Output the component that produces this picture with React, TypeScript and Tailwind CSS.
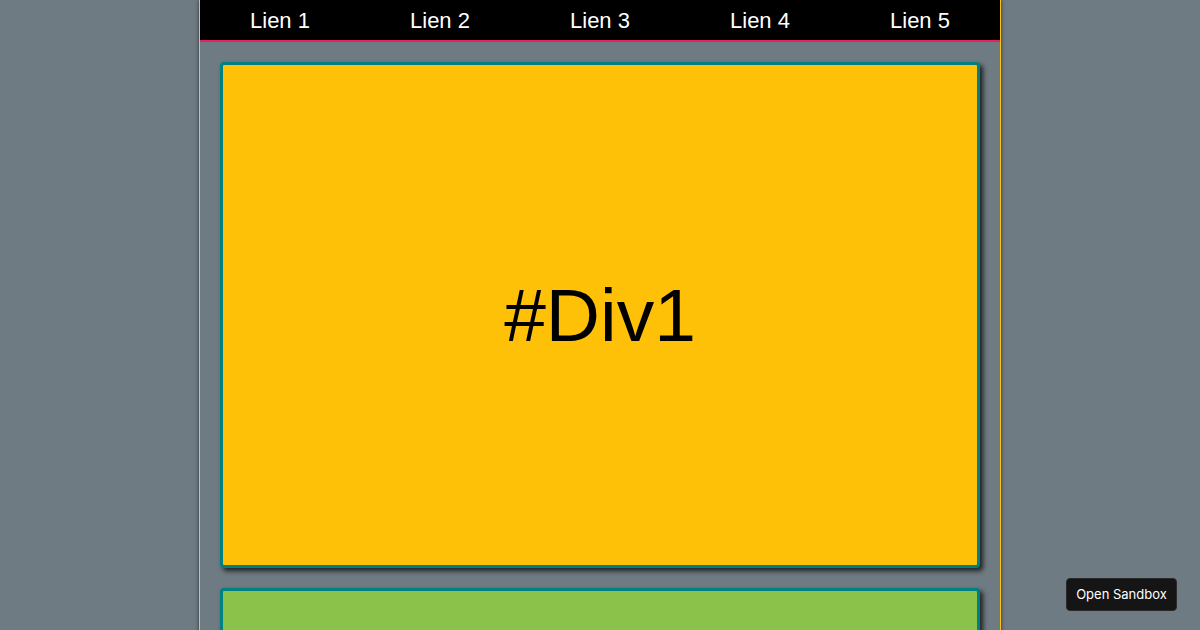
import React from "react";

const links = ["Lien 1", "Lien 2", "Lien 3", "Lien 4", "Lien 5"];

const blocks = [
  { id: "#Div1", color: "bg-[#ffc107]" },
  { id: "#Div2", color: "bg-[#8bc34a]" },
];

export default function App() {
  return (
    <div className="min-h-screen bg-[#6f7b82] font-['Liberation_Sans',Arial,sans-serif]">
      <div className="mx-auto w-[802px] min-h-screen border-x border-[#ffc107] shadow-[0_0_4px_rgba(0,0,0,0.6)]">
        <nav className="grid grid-cols-5 h-[42px] bg-black border-b-2 border-[#e91e63]">
          {links.map((l) => (
            <a key={l} className="flex items-center justify-center text-[22px] text-white pt-[1px]">
              {l}
            </a>
          ))}
        </nav>
        <div className="flex flex-col gap-5 p-5">
          {blocks.map((b) => (
            <div
              key={b.id}
              className={`${b.color} h-[506px] flex items-center justify-center border-[3px] border-[#008080] rounded-[4px] shadow-[3px_3px_5px_rgba(0,0,0,0.75)]`}
            >
              <span className="text-[75px] text-black">{b.id}</span>
            </div>
          ))}
        </div>
      </div>
      <button className="fixed right-[23px] bottom-[19px] h-[33px] w-[111px] rounded-[4px] bg-[#151515] border border-[#2a2a2a] text-[13px] text-white font-['Inter',sans-serif]">
        Open Sandbox
      </button>
    </div>
  );
}
